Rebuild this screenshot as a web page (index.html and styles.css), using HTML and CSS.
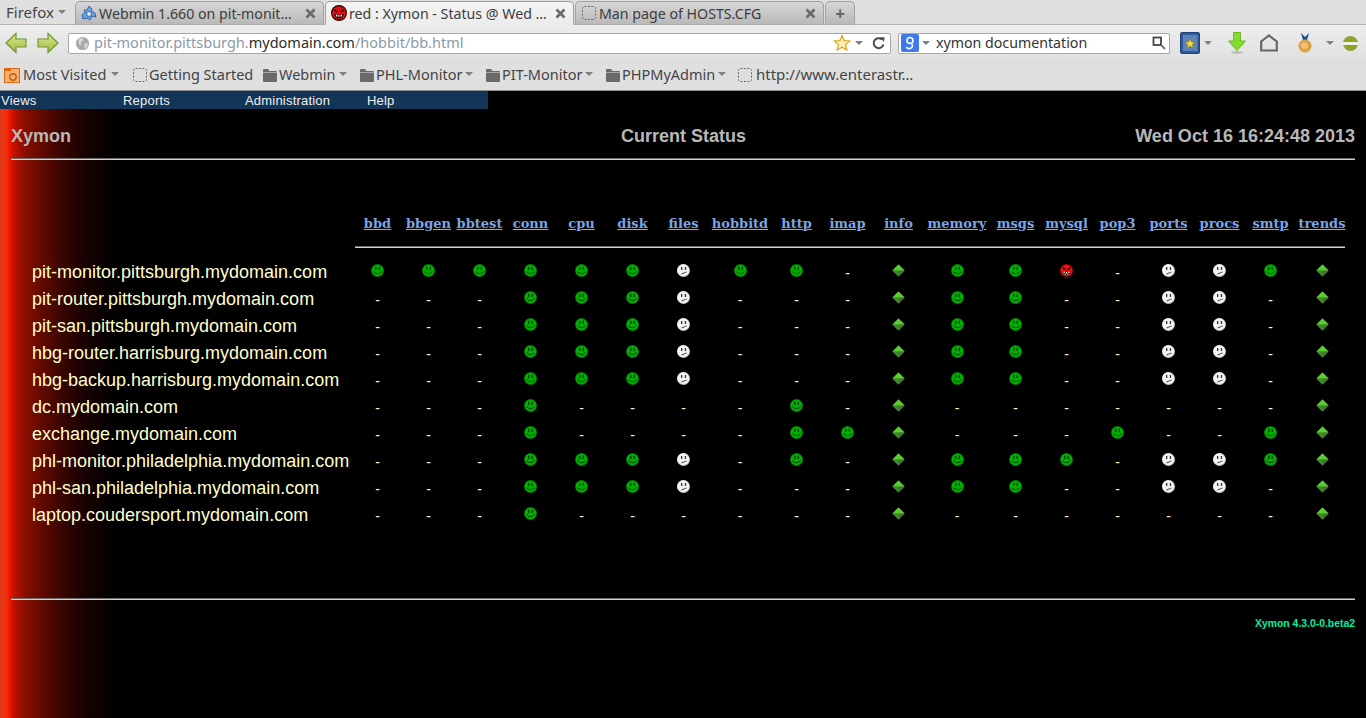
FILE: index.html
```html
<!DOCTYPE html>
<html lang="en">
<head>
<meta charset="utf-8">
<title>red : Xymon - Status</title>
<link rel="stylesheet" href="styles.css">
</head>
<body>
<svg class="defs" width="0" height="0" aria-hidden="true">
  <defs>
    <symbol id="g" viewBox="0 0 13 13">
      <circle cx="6.5" cy="6.5" r="6.5" fill="#007400"/>
      <circle cx="6.5" cy="6.5" r="5.8" fill="#00b000"/>
      <rect x="4" y="2.8" width="1.5" height="3.2" fill="#004400"/>
      <rect x="7.5" y="2.8" width="1.5" height="3.2" fill="#004400"/>
      <path d="M2.4 7 Q6.5 11.6 10.6 7 L10.6 8.2 Q6.5 12.4 2.4 8.2Z" fill="#004400"/>
    </symbol>
    <symbol id="w" viewBox="0 0 13 13">
      <circle cx="6.5" cy="6.5" r="6.5" fill="#c4c4c4"/>
      <circle cx="6.2" cy="6.2" r="5.9" fill="#f4f4f4"/>
      <rect x="4" y="3" width="1.3" height="3" fill="#333"/>
      <rect x="7.8" y="3" width="1.3" height="3" fill="#333"/>
      <path d="M4.4 9.6 L9.6 7.4 L9.8 8.2 L4.8 10.4Z" fill="#444"/>
    </symbol>
    <symbol id="r" viewBox="0 0 13 13">
      <circle cx="6.5" cy="6.5" r="6.5" fill="#900000"/>
      <circle cx="6.5" cy="6.5" r="5.8" fill="#f01010"/>
      <path d="M2.2 2.8 L5.6 4.8 L5.2 6.2 L2.8 5Z M10.8 2.8 L7.4 4.8 L7.8 6.2 L10.2 5Z" fill="#1a0000"/>
      <path d="M2.4 7 Q6.5 8.2 10.6 7 Q9.8 11.2 6.5 11.2 Q3.2 11.2 2.4 7Z" fill="#1a0000"/>
      <path d="M3.4 7.6h1.3v1.5h-1.3Z M5.85 8h1.3v1.5h-1.3Z M8.3 7.6h1.3v1.5h-1.3Z M4.6 9.6h1.1v1.1h-1.1Z M7.3 9.6h1.1v1.1h-1.1Z" fill="#fff"/>
    </symbol>
    <symbol id="d" viewBox="0 0 13 13">
      <path d="M6.5 .5 L.5 6.5 L6.5 12.5 L12.5 6.5Z" fill="#4c9a30"/>
      <path d="M6.5 .5 L.5 6.5 H12.5Z" fill="#5ccf30"/>
      <path d="M.5 6.5 L6.5 12.5 V6.5Z" fill="#3f8a2c"/>
      <path d="M12.5 6.5 L6.5 12.5 V6.5Z" fill="#3f7a2c"/>
    </symbol>
    <symbol id="blank" viewBox="0 0 16 16">
      <rect x="1.5" y="1.5" width="13" height="13" rx="2" fill="none" stroke="#6a6a6a" stroke-dasharray="2 1.4"/>
    </symbol>
    <symbol id="folder" viewBox="0 0 16 16">
      <path d="M1 3 Q1 2 2 2 H6 L7.5 4 H14 Q15 4 15 5 V14 Q15 15 14 15 H2 Q1 15 1 14Z" fill="#6a6a6a"/>
      <rect x="1" y="5" width="14" height="1" fill="#a8a8a8"/>
    </symbol>
    <symbol id="devil" viewBox="0 0 16 16">
      <circle cx="8" cy="8" r="8" fill="#2a0000"/>
      <circle cx="8" cy="8" r="6.8" fill="#e01010"/>
      <path d="M3 4 L7 6.4 L6.4 7.6 L3.6 6Z M13 4 L9 6.4 L9.6 7.6 L12.4 6Z" fill="#1a0000"/>
      <path d="M3.2 9 Q8 10.6 12.8 9 Q11.6 13.6 8 13.6 Q4.4 13.6 3.2 9Z" fill="#1a0000"/>
      <path d="M5 9.8h1.4v1.6H5Z M7.3 10.2h1.4v1.6H7.3Z M9.6 9.8H11v1.6H9.6Z" fill="#fff"/>
    </symbol>
    <symbol id="close" viewBox="0 0 11 11">
      <path d="M1.5 1.5 L9.5 9.5 M9.5 1.5 L1.5 9.5" stroke="#6a6a6a" stroke-width="2.6"/>
    </symbol>
  </defs>
</svg>

<header class="chrome">
  <div class="tabbar">
    <div class="appmenu">Firefox<span class="drop"></span></div>
    <div class="tab">
      <svg class="favicon" viewBox="0 0 16 16"><path d="M8 1 L11 4 L10 6 L14 8 L15 12 L11 11 L9 15 L6 13 L2 14 L1 10 L4 8 L3 5 L6 5Z" fill="#6ea2d8" stroke="#2c68ac"/><circle cx="8" cy="9" r="2.4" fill="#eaf2fa" stroke="#2c68ac"/></svg>
      <span class="tabtext">Webmin 1.660 on pit-monit…</span>
      <svg class="closex"><use href="#close"/></svg>
    </div>
    <div class="tab active">
      <svg class="favicon"><use href="#devil"/></svg>
      <span class="tabtext">red : Xymon - Status @ Wed …</span>
      <svg class="closex"><use href="#close"/></svg>
    </div>
    <div class="tab">
      <svg class="favicon"><use href="#blank"/></svg>
      <span class="tabtext">Man page of HOSTS.CFG</span>
      <svg class="closex"><use href="#close"/></svg>
    </div>
    <div class="tab newtab">+</div>
  </div>

  <div class="navbar">
    <svg class="navarrow" viewBox="0 0 22 22"><defs><linearGradient id="arr" x1="0" y1="0" x2="0" y2="1"><stop offset="0" stop-color="#dbe68c"/><stop offset="1" stop-color="#9cbc44"/></linearGradient></defs><path d="M1 11 L11 1.5 V7 H21 V15 H11 V20.5Z" fill="url(#arr)" stroke="#6f9a30" stroke-width="1.2"/></svg>
    <svg class="navarrow fwd" viewBox="0 0 22 22"><path d="M21 11 L11 1.5 V7 H1 V15 H11 V20.5Z" fill="url(#arr)" stroke="#6f9a30" stroke-width="1.2"/></svg>
    <div class="urlbar">
      <svg class="globe" viewBox="0 0 16 16"><circle cx="8" cy="8" r="7" fill="#a9a9a9"/><path d="M4 3 L8 2 L9 5 L6 7 L7 10 L4 9Z M10 8 L14 8 L12 13 L10 12Z" fill="#d8d8d8"/></svg>
      <span class="urltext">pit-monitor.pittsburgh.<b>mydomain.com</b>/hobbit/bb.html</span>
      <svg class="star" viewBox="0 0 18 18"><path d="M9 1.5 L11.2 6.6 L16.8 7 L12.5 10.6 L13.9 16 L9 13.2 L4.1 16 L5.5 10.6 L1.2 7 L6.8 6.6Z" fill="#fff2b0" stroke="#d4a820" stroke-width="1.2"/></svg>
      <span class="drop urldrop"></span>
      <svg class="reload" viewBox="0 0 14 14"><path d="M11.5 8.5 A5 5 0 1 1 10 3.4" fill="none" stroke="#4a4a4a" stroke-width="2"/><path d="M8 1 L12.6 1.4 L12 6Z" fill="#4a4a4a"/></svg>
    </div>
    <div class="searchbar">
      <svg class="gicon" viewBox="0 0 18 18"><rect width="18" height="18" rx="2" fill="#3f78ea"/><circle cx="9" cy="6.5" r="3" fill="none" stroke="#fff" stroke-width="1.6"/><path d="M11 10 Q12.5 13 9 14.5 Q6 15 5.5 13" fill="none" stroke="#fff" stroke-width="1.6"/></svg>
      <span class="drop searchdrop"></span>
      <span class="searchtext">xymon documentation</span>
      <svg class="mag" viewBox="0 0 14 14"><rect x="1.5" y="1.5" width="7.5" height="7.5" fill="#fff" stroke="#444" stroke-width="1.8"/><path d="M9 9 L13 13" stroke="#777" stroke-width="2"/></svg>
    </div>
    <svg class="book" viewBox="0 0 20 22"><rect x=".5" y=".5" width="19" height="21" rx="1.5" fill="#2f5a98" stroke="#1e3f78"/><rect x="3" y="3" width="14.5" height="16" fill="#5d82b4"/><path d="M10 6.5 L11.4 10 L15 10.2 L12.2 12.4 L13.2 16 L10 14 L6.8 16 L7.8 12.4 L5 10.2 L8.6 10Z" fill="#f4dc3c" stroke="#8a7410" stroke-width=".5"/></svg>
    <span class="drop bookdrop"></span>
    <svg class="dl" viewBox="0 0 18 22"><path d="M5.5 .5 H12.5 V9 H17.5 L9 18.5 L.5 9 H5.5Z" fill="#86dc2c" stroke="#6cb81e"/><ellipse cx="9" cy="20.5" rx="6" ry="1.5" fill="#bdbdbd"/></svg>
    <svg class="home" viewBox="0 0 18 18"><path d="M1.2 16.5 V7.5 L9 1.5 L16.8 7.5 V16.5Z" fill="none" stroke="#666" stroke-width="2.2"/></svg>
    <svg class="medal" viewBox="0 0 14 20"><path d="M3 0 L7 4 L11 0 L9 7 H5Z" fill="#1f4f8c"/><circle cx="7" cy="13" r="6.5" fill="#d8a040"/><circle cx="6.5" cy="12.5" r="3.6" fill="#eec070"/></svg>
    <span class="drop medaldrop"></span>
    <svg class="addon" viewBox="0 0 15 15"><circle cx="7.5" cy="7.5" r="7.5" fill="#8aa52c"/><rect y="6" width="15" height="3" fill="#f2f2e4"/></svg>
  </div>

  <nav class="bookmarks">
    <span class="bm mostvisited"><svg class="bmicon" viewBox="0 0 16 16"><rect x=".5" y="1.5" width="15" height="14" fill="#f4b070" stroke="#d86a10"/><rect x="1" y="1" width="6" height="3" fill="#d86a10"/><circle cx="9" cy="10" r="3.2" fill="none" stroke="#d05a00" stroke-width="1.4"/></svg>Most Visited<span class="drop"></span></span>
    <span class="bm gs"><svg class="bmicon"><use href="#blank"/></svg>Getting Started</span>
    <span class="bm wm"><svg class="bmicon"><use href="#folder"/></svg>Webmin<span class="drop"></span></span>
    <span class="bm phl"><svg class="bmicon"><use href="#folder"/></svg>PHL-Monitor<span class="drop"></span></span>
    <span class="bm pit"><svg class="bmicon"><use href="#folder"/></svg>PIT-Monitor<span class="drop"></span></span>
    <span class="bm pma"><svg class="bmicon"><use href="#folder"/></svg>PHPMyAdmin<span class="drop"></span></span>
    <span class="bm lastbm"><svg class="bmicon"><use href="#blank"/></svg>http://www.enterastr…</span>
  </nav>
</header>

<main class="page">
  <div class="menubar">
    <span>Views</span><span>Reports</span><span>Administration</span><span>Help</span>
  </div>

  <div class="content">
    <div class="titlerow">
      <span>Xymon</span>
      <span class="titlemid">Current Status</span>
      <span class="titledate">Wed Oct 16 16:24:48 2013</span>
    </div>
    <hr class="rule">

    <table class="status">
      <colgroup>
        <col class="chost"><col class="c51"><col class="c51"><col class="c51"><col class="c51"><col class="c51"><col class="c51"><col class="c51"><col class="c62"><col class="c51"><col class="c51"><col class="c51"><col class="c66"><col class="c51"><col class="c51"><col class="c51"><col class="c51"><col class="c51"><col class="c51"><col class="c52">
      </colgroup>
      <thead>
        <tr class="heads">
          <th></th>
          <th><a href="#">bbd</a></th><th><a href="#">bbgen</a></th><th><a href="#">bbtest</a></th><th><a href="#">conn</a></th><th><a href="#">cpu</a></th><th><a href="#">disk</a></th><th><a href="#">files</a></th><th><a href="#">hobbitd</a></th><th><a href="#">http</a></th><th><a href="#">imap</a></th><th><a href="#">info</a></th><th><a href="#">memory</a></th><th><a href="#">msgs</a></th><th><a href="#">mysql</a></th><th><a href="#">pop3</a></th><th><a href="#">ports</a></th><th><a href="#">procs</a></th><th><a href="#">smtp</a></th><th><a href="#">trends</a></th>
        </tr>
        <tr class="headrule"><th></th><th colspan="19"><hr class="rule"></th></tr>
      </thead>
      <tbody>
        <tr><td class="host">pit-monitor.pittsburgh.mydomain.com</td><td><svg class="i"><use href="#g"/></svg></td><td><svg class="i"><use href="#g"/></svg></td><td><svg class="i"><use href="#g"/></svg></td><td><svg class="i"><use href="#g"/></svg></td><td><svg class="i"><use href="#g"/></svg></td><td><svg class="i"><use href="#g"/></svg></td><td><svg class="i"><use href="#w"/></svg></td><td><svg class="i"><use href="#g"/></svg></td><td><svg class="i"><use href="#g"/></svg></td><td>-</td><td><svg class="i"><use href="#d"/></svg></td><td><svg class="i"><use href="#g"/></svg></td><td><svg class="i"><use href="#g"/></svg></td><td><svg class="i"><use href="#r"/></svg></td><td>-</td><td><svg class="i"><use href="#w"/></svg></td><td><svg class="i"><use href="#w"/></svg></td><td><svg class="i"><use href="#g"/></svg></td><td><svg class="i"><use href="#d"/></svg></td></tr>
        <tr><td class="host">pit-router.pittsburgh.mydomain.com</td><td>-</td><td>-</td><td>-</td><td><svg class="i"><use href="#g"/></svg></td><td><svg class="i"><use href="#g"/></svg></td><td><svg class="i"><use href="#g"/></svg></td><td><svg class="i"><use href="#w"/></svg></td><td>-</td><td>-</td><td>-</td><td><svg class="i"><use href="#d"/></svg></td><td><svg class="i"><use href="#g"/></svg></td><td><svg class="i"><use href="#g"/></svg></td><td>-</td><td>-</td><td><svg class="i"><use href="#w"/></svg></td><td><svg class="i"><use href="#w"/></svg></td><td>-</td><td><svg class="i"><use href="#d"/></svg></td></tr>
        <tr><td class="host">pit-san.pittsburgh.mydomain.com</td><td>-</td><td>-</td><td>-</td><td><svg class="i"><use href="#g"/></svg></td><td><svg class="i"><use href="#g"/></svg></td><td><svg class="i"><use href="#g"/></svg></td><td><svg class="i"><use href="#w"/></svg></td><td>-</td><td>-</td><td>-</td><td><svg class="i"><use href="#d"/></svg></td><td><svg class="i"><use href="#g"/></svg></td><td><svg class="i"><use href="#g"/></svg></td><td>-</td><td>-</td><td><svg class="i"><use href="#w"/></svg></td><td><svg class="i"><use href="#w"/></svg></td><td>-</td><td><svg class="i"><use href="#d"/></svg></td></tr>
        <tr><td class="host">hbg-router.harrisburg.mydomain.com</td><td>-</td><td>-</td><td>-</td><td><svg class="i"><use href="#g"/></svg></td><td><svg class="i"><use href="#g"/></svg></td><td><svg class="i"><use href="#g"/></svg></td><td><svg class="i"><use href="#w"/></svg></td><td>-</td><td>-</td><td>-</td><td><svg class="i"><use href="#d"/></svg></td><td><svg class="i"><use href="#g"/></svg></td><td><svg class="i"><use href="#g"/></svg></td><td>-</td><td>-</td><td><svg class="i"><use href="#w"/></svg></td><td><svg class="i"><use href="#w"/></svg></td><td>-</td><td><svg class="i"><use href="#d"/></svg></td></tr>
        <tr><td class="host">hbg-backup.harrisburg.mydomain.com</td><td>-</td><td>-</td><td>-</td><td><svg class="i"><use href="#g"/></svg></td><td><svg class="i"><use href="#g"/></svg></td><td><svg class="i"><use href="#g"/></svg></td><td><svg class="i"><use href="#w"/></svg></td><td>-</td><td>-</td><td>-</td><td><svg class="i"><use href="#d"/></svg></td><td><svg class="i"><use href="#g"/></svg></td><td><svg class="i"><use href="#g"/></svg></td><td>-</td><td>-</td><td><svg class="i"><use href="#w"/></svg></td><td><svg class="i"><use href="#w"/></svg></td><td>-</td><td><svg class="i"><use href="#d"/></svg></td></tr>
        <tr><td class="host">dc.mydomain.com</td><td>-</td><td>-</td><td>-</td><td><svg class="i"><use href="#g"/></svg></td><td>-</td><td>-</td><td>-</td><td>-</td><td><svg class="i"><use href="#g"/></svg></td><td>-</td><td><svg class="i"><use href="#d"/></svg></td><td>-</td><td>-</td><td>-</td><td>-</td><td>-</td><td>-</td><td>-</td><td><svg class="i"><use href="#d"/></svg></td></tr>
        <tr><td class="host">exchange.mydomain.com</td><td>-</td><td>-</td><td>-</td><td><svg class="i"><use href="#g"/></svg></td><td>-</td><td>-</td><td>-</td><td>-</td><td><svg class="i"><use href="#g"/></svg></td><td><svg class="i"><use href="#g"/></svg></td><td><svg class="i"><use href="#d"/></svg></td><td>-</td><td>-</td><td>-</td><td><svg class="i"><use href="#g"/></svg></td><td>-</td><td>-</td><td><svg class="i"><use href="#g"/></svg></td><td><svg class="i"><use href="#d"/></svg></td></tr>
        <tr><td class="host">phl-monitor.philadelphia.mydomain.com</td><td>-</td><td>-</td><td>-</td><td><svg class="i"><use href="#g"/></svg></td><td><svg class="i"><use href="#g"/></svg></td><td><svg class="i"><use href="#g"/></svg></td><td><svg class="i"><use href="#w"/></svg></td><td>-</td><td><svg class="i"><use href="#g"/></svg></td><td>-</td><td><svg class="i"><use href="#d"/></svg></td><td><svg class="i"><use href="#g"/></svg></td><td><svg class="i"><use href="#g"/></svg></td><td><svg class="i"><use href="#g"/></svg></td><td>-</td><td><svg class="i"><use href="#w"/></svg></td><td><svg class="i"><use href="#w"/></svg></td><td><svg class="i"><use href="#g"/></svg></td><td><svg class="i"><use href="#d"/></svg></td></tr>
        <tr><td class="host">phl-san.philadelphia.mydomain.com</td><td>-</td><td>-</td><td>-</td><td><svg class="i"><use href="#g"/></svg></td><td><svg class="i"><use href="#g"/></svg></td><td><svg class="i"><use href="#g"/></svg></td><td><svg class="i"><use href="#w"/></svg></td><td>-</td><td>-</td><td>-</td><td><svg class="i"><use href="#d"/></svg></td><td><svg class="i"><use href="#g"/></svg></td><td><svg class="i"><use href="#g"/></svg></td><td>-</td><td>-</td><td><svg class="i"><use href="#w"/></svg></td><td><svg class="i"><use href="#w"/></svg></td><td>-</td><td><svg class="i"><use href="#d"/></svg></td></tr>
        <tr><td class="host">laptop.coudersport.mydomain.com</td><td>-</td><td>-</td><td>-</td><td><svg class="i"><use href="#g"/></svg></td><td>-</td><td>-</td><td>-</td><td>-</td><td>-</td><td>-</td><td><svg class="i"><use href="#d"/></svg></td><td>-</td><td>-</td><td>-</td><td>-</td><td>-</td><td>-</td><td>-</td><td><svg class="i"><use href="#d"/></svg></td></tr>
      </tbody>
    </table>

    <hr class="rule footrule">
    <div class="version">Xymon 4.3.0-0.beta2</div>
  </div>
</main>
</body>
</html>
```
FILE: styles.css
```css
* { box-sizing: border-box; }
html, body { margin: 0; height: 718px; overflow: hidden; }
body { background: #000; font-family: "Liberation Sans", Arial, sans-serif; }
.defs { display: block; height: 0; }

/* browser chrome */
.chrome {
  height: 91px;
  background: #dfdfdf;
  border-bottom: 1px solid #8f8f8f;
  font-family: "Noto Sans", "Open Sans", sans-serif;
  font-size: 14.5px;
  color: #444;
}
.drop {
  display: inline-block;
  width: 0; height: 0;
  border-left: 4px solid transparent;
  border-right: 4px solid transparent;
  border-top: 4px solid #808080;
}
.tabbar {
  height: 25px;
  display: flex;
  align-items: flex-end;
  padding-top: 1px;
  border-bottom: 1px solid #b4b4b4;
}
.appmenu {
  width: 75px;
  height: 24px;
  padding-left: 6px;
  display: flex;
  align-items: center;
  gap: 4px;
  font-size: 15px;
}
.tab {
  width: 249px;
  height: 24px;
  margin-right: 1px;
  margin-bottom: -1px;
  padding: 0 6px 0 5px;
  display: flex;
  align-items: center;
  gap: 1px;
  border: 1px solid #a0a0a0;
  border-bottom-color: #b0b0b0;
  border-radius: 5px 5px 0 0;
  background: linear-gradient(#d6d6d6, #b9b9b9);
  font-size: 14.2px;
  color: #3c3c3c;
  white-space: nowrap;
}
.tab.active {
  background: linear-gradient(#f4f4f4, #ececec);
  border-bottom-color: #ececec;
}
.newtab {
  width: 30px;
  padding: 0;
  justify-content: center;
  font-weight: 700;
  font-size: 17px;
  color: #666;
}
.favicon { width: 16px; height: 16px; flex: none; }
.tabtext { flex: 1; padding-left: 1px; }
.closex { width: 11px; height: 11px; flex: none; margin-right: 1px; }

.navbar {
  height: 35px;
  display: flex;
  align-items: center;
  padding: 1px 0 0 5px;
  background: linear-gradient(#ededed, #e0e0e0);
}
.navarrow { width: 22px; height: 22px; flex: none; }
.navarrow.fwd { margin-left: 10px; }
.urlbar {
  width: 823px;
  height: 21px;
  margin-left: 9px;
  padding: 0 4px 0 6px;
  display: flex;
  align-items: center;
  background: #fff;
  border: 1px solid #a8a8a8;
  border-radius: 2px;
}
.globe { width: 15px; height: 15px; flex: none; }
.urltext { flex: 1; margin-left: 4px; padding-bottom: 2px; color: #8c9aa8; white-space: nowrap; }
.urltext b { font-weight: 400; color: #2c2c2c; }
.star { width: 18px; height: 18px; flex: none; }
.urldrop { margin: 0 9px 0 4px; }
.reload { width: 14px; height: 14px; flex: none; }

.searchbar {
  width: 272px;
  height: 21px;
  margin-left: 7px;
  padding: 0 3px 0 2px;
  display: flex;
  align-items: center;
  background: #fff;
  border: 1px solid #a8a8a8;
  border-radius: 2px;
}
.gicon { width: 18px; height: 18px; flex: none; }
.searchdrop { margin-left: 3px; }
.searchtext { flex: 1; margin-left: 6px; padding-bottom: 2px; font-size: 14.2px; color: #333; white-space: nowrap; }
.mag { width: 14px; height: 14px; flex: none; }

.book { width: 20px; height: 22px; margin-left: 10px; flex: none; }
.bookdrop { margin-left: 4px; }
.dl { width: 18px; height: 22px; margin-left: 16px; flex: none; }
.home { width: 18px; height: 18px; margin-left: 14px; flex: none; }
.medal { width: 14px; height: 20px; margin-left: 20px; flex: none; }
.medaldrop { margin-left: 14px; }
.addon { width: 15px; height: 15px; margin-left: 9px; flex: none; }

.bookmarks {
  height: 30px;
  display: flex;
  align-items: center;
  padding: 0 0 2px 4px;
  white-space: nowrap;
}
.bm { display: flex; align-items: center; gap: 1px; }
.bm .drop { margin-left: 2px; }
.bmicon { width: 16px; height: 16px; flex: none; margin-top: 2px; }
.mostvisited { width: 128px; gap: 3px; }
.gs { width: 130px; }
.wm { width: 97px; }
.phl { width: 126px; }
.pit { width: 120px; }
.pma { width: 132px; }
.lastbm { gap: 3px; font-size: 15px; }

/* page */
.page { height: 627px; background: #000; }
.menubar {
  width: 488px;
  height: 18px;
  display: grid;
  grid-template-columns: repeat(4, 122px);
  align-items: center;
  padding: 1px 0 0 1px;
  background: #133558;
  color: #f0f0f0;
  font-size: 13px;
  letter-spacing: .2px;
}
.content {
  height: 609px;
  padding: 18px 11px 0;
  background: linear-gradient(to right, #e03a18 0, #f03010 7px, #ff1c00 8px, #c01000 14px, #8c0e00 24px, #640a00 40px, #3c0600 60px, #1a0200 82px, #080000 104px, #000 122px);
}
.titlerow {
  height: 19px;
  display: grid;
  grid-template-columns: 1fr auto 1fr;
  align-items: center;
  font-weight: 700;
  font-size: 18px;
  line-height: 19px;
  color: #b8b8b8;
}
.titlemid { padding-left: 1px; }
.titledate { text-align: right; }
.rule {
  height: 2px;
  margin: 0;
  border: 0;
  background: linear-gradient(#6c6c6c 50%, #d0d0d0 50%);
}
.titlerow + .rule { margin-top: 12px; }

.status {
  table-layout: fixed;
  width: 1337px;
  margin-top: 49px;
  border-collapse: collapse;
  color: #ffffcc;
}
.chost { width: 341px; }
.c51 { width: 51px; }
.c52 { width: 52px; }
.c62 { width: 62px; }
.c66 { width: 66px; }
.status th, .status td { padding: 0; text-align: center; }
.heads th { height: 29px; font-family: "DejaVu Serif", serif; font-size: 13px; font-weight: 700; }
.heads a { color: #7ba4e6; text-decoration-color: #00ffaa; }
.headrule th { height: 12px; vertical-align: top; padding: 8px 3px 0; }
.headrule th:first-child { padding: 0; }
.status tbody tr { height: 27px; }
.status tbody tr:first-child { height: 37px; }
.status tbody tr:first-child td { padding-top: 10px; }
.status td { font-size: 14px; line-height: 27px; }
.status td.host { padding-left: 21px; padding-bottom: 2px; line-height: 25px; text-align: left; font-size: 18px; white-space: nowrap; }
.i { display: inline-block; width: 13px; height: 13px; vertical-align: 1px; }

.footrule { margin-top: 68px; }
.version {
  margin-top: 18px;
  text-align: right;
  font-size: 10.4px;
  font-weight: 700;
  color: #00f0a0;
}
```
